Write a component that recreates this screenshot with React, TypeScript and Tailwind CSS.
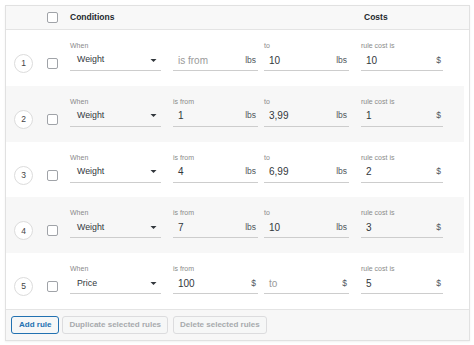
import React from "react";

interface Rule {
  id: number;
  when: string;
  from: string;
  fromLabel: boolean;
  to: string;
  unit: string;
  cost: string;
}

const rules: Rule[] = [
  { id: 1, when: "Weight", from: "", fromLabel: false, to: "10", unit: "lbs", cost: "10" },
  { id: 2, when: "Weight", from: "1", fromLabel: true, to: "3,99", unit: "lbs", cost: "1" },
  { id: 3, when: "Weight", from: "4", fromLabel: true, to: "6,99", unit: "lbs", cost: "2" },
  { id: 4, when: "Weight", from: "7", fromLabel: true, to: "10", unit: "lbs", cost: "3" },
  { id: 5, when: "Price", from: "100", fromLabel: true, to: "", unit: "$", cost: "5" },
];

const Checkbox: React.FC = () => (
  <div className="w-[11px] h-[11px] rounded-[2px] border border-[#a0a3a8] bg-white" />
);

const Label: React.FC<{ text?: string }> = ({ text }) => (
  <div className="h-[9px] text-[7px] leading-[9px] text-[#8a8a8a]">{text}</div>
);

const Field: React.FC<{
  label?: string;
  value: string;
  placeholder?: string;
  suffix: string;
  className: string;
}> = ({ label, value, placeholder, suffix, className }) => (
  <div className={className}>
    <Label text={label} />
    <div className="h-[21px] flex items-center justify-between border-b border-[#cdcdcd] pl-[5px] pr-[2px]">
      {value ? (
        <span className="text-[10px] text-[#32373c]">{value}</span>
      ) : (
        <span className="text-[10px] text-[#9a9a9a]">{placeholder}</span>
      )}
      <span className="text-[8.5px] text-[#50575e]">{suffix}</span>
    </div>
  </div>
);

const Row: React.FC<{ rule: Rule; shaded: boolean }> = ({ rule, shaded }) => (
  <div
    className={`flex items-start h-[55.8px] pt-[11px] mr-[5px] ${
      shaded ? "bg-[#f7f7f7]" : "bg-white"
    }`}
  >
    <div className="ml-[8px] mt-[13px] w-[19px] h-[19px] rounded-full border border-[#dcdcdc] bg-white flex items-center justify-center text-[8.5px] text-[#444]">
      {rule.id}
    </div>
    <div className="ml-[14px] mt-[17px]">
      <Checkbox />
    </div>
    <div className="ml-[12px] w-[91px]">
      <Label text="When" />
      <div className="h-[21px] flex items-center justify-between border-b border-[#cdcdcd] pl-[7px] pr-[4px]">
        <span className="text-[8.8px] text-[#32373c]">{rule.when}</span>
        <svg width="7" height="5" viewBox="0 0 7 5">
          <path d="M0.5 1 L3.5 4 L6.5 1 Z" fill="#32373c" />
        </svg>
      </div>
    </div>
    <Field
      className="ml-[12px] w-[85px]"
      label={rule.fromLabel ? "is from" : undefined}
      value={rule.from}
      placeholder="is from"
      suffix={rule.unit}
    />
    <Field
      className="ml-[6px] w-[85px]"
      label={rule.to ? "to" : undefined}
      value={rule.to}
      placeholder="to"
      suffix={rule.unit}
    />
    <Field
      className="ml-[12px] w-[82px]"
      label="rule cost is"
      value={rule.cost}
      suffix="$"
    />
  </div>
);

export default function App() {
  return (
    <div
      className="w-[474px] h-[345px] bg-white pt-[5px] pl-[5px]"
      style={{ fontFamily: '"Liberation Sans", Arial, sans-serif' }}
    >
      <div className="w-[465px] border border-[#e1e1e1] shadow-[0_1px_2px_rgba(0,0,0,0.06)]">
        <div className="flex items-center h-[24px] bg-[#f8f8f8] border-b border-[#e4e4e4] text-[8.5px] font-bold text-[#23282d]">
          <div className="ml-[41px]">
            <Checkbox />
          </div>
          <div className="ml-[12px] w-[294px]">Conditions</div>
          <div>Costs</div>
        </div>
        {rules.map((r, i) => (
          <Row key={r.id} rule={r} shaded={i % 2 === 1} />
        ))}
        <div className="flex items-center gap-[3px] h-[31px] bg-[#f7f7f7] border-t border-[#e4e4e4] pl-[5px] text-[8px] font-bold">
          <button className="h-[18px] px-[7px] rounded-[3px] border border-[#2271b1] bg-[#f6f7f7] text-[#2271b1]">
            Add rule
          </button>
          <button className="h-[18px] px-[6px] rounded-[3px] border border-[#dcdcde] bg-[#f6f7f7] text-[#a7aaad]">
            Duplicate selected rules
          </button>
          <button className="h-[18px] px-[6px] rounded-[3px] border border-[#dcdcde] bg-[#f6f7f7] text-[#a7aaad] ml-[2px]">
            Delete selected rules
          </button>
        </div>
      </div>
    </div>
  );
}
